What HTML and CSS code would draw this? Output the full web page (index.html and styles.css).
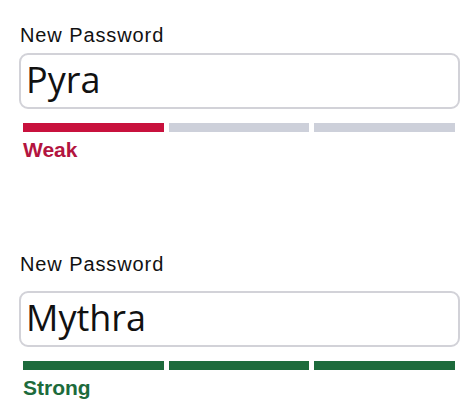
FILE: index.html
```html
<!DOCTYPE html>
<html lang="en">

<head>
    <meta charset="UTF-8">
    <meta name="viewport" content="width=device-width, initial-scale=1.0">
    <title>Password strength</title>
    <link rel="stylesheet" href="styles.css">
</head>

<body>
    <div class="field weak">
        <label class="label" for="pw1">New Password</label>
        <input class="box" id="pw1" type="text" value="Pyra">
        <div class="meter">
            <span class="on"></span>
            <span></span>
            <span></span>
        </div>
        <div class="hint">Weak</div>
    </div>

    <div class="field strong">
        <label class="label" for="pw2">New Password</label>
        <input class="box" id="pw2" type="text" value="Mythra">
        <div class="meter">
            <span class="on"></span>
            <span class="on"></span>
            <span class="on"></span>
        </div>
        <div class="hint">Strong</div>
    </div>
</body>

</html>
```
FILE: styles.css
```css
body {
    margin: 0;
    padding: 0 14px 0 19px;
    background-color: #fff;
    font-family: "Liberation Sans", Arial, sans-serif;
}

.field {
    display: flex;
    flex-direction: column;
    padding-top: 24px;
}

.field.strong {
    padding-top: 91px;
}

.label {
    font-size: 20px;
    line-height: 22px;
    letter-spacing: 0.9px;
    color: #111;
    padding-left: 1px;
}

.box {
    margin-top: 7px;
    height: 56px;
    box-sizing: border-box;
    border: 2px solid #d2d2d8;
    border-radius: 9px;
    padding: 0 5px 3px;
    font-family: "Open Sans", sans-serif;
    font-size: 36px;
    color: #111;
    outline: none;
    background: #fff;
}

.strong .box {
    margin-top: 16px;
}

.meter {
    display: grid;
    grid-template-columns: 1fr 1fr 1fr;
    gap: 5px;
    height: 9px;
    margin: 14px 5px 0 4px;
}

.meter span {
    background-color: #cdd0da;
}

.weak .meter .on {
    background-color: #c8113d;
}

.strong .meter .on {
    background-color: #1d6b3c;
}

.hint {
    margin: 6px 0 0 4px;
    font-size: 21px;
    line-height: 24px;
    font-weight: bold;
}

.weak .hint {
    color: #b3153f;
}

.strong .hint {
    color: #1d6b3c;
}
```
